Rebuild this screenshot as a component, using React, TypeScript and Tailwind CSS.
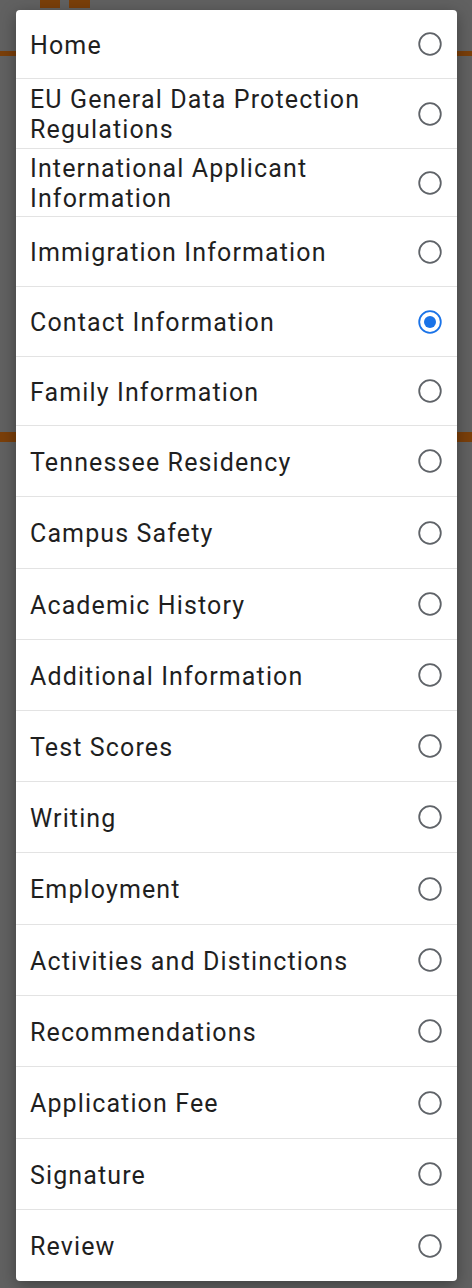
const items: { label: string; h: number }[] = [
  { label: "Home", h: 69 },
  { label: "EU General Data Protection Regulations", h: 70 },
  { label: "International Applicant Information", h: 68 },
  { label: "Immigration Information", h: 70 },
  { label: "Contact Information", h: 70 },
  { label: "Family Information", h: 69 },
  { label: "Tennessee Residency", h: 71 },
  { label: "Campus Safety", h: 72 },
  { label: "Academic History", h: 71 },
  { label: "Additional Information", h: 71 },
  { label: "Test Scores", h: 71 },
  { label: "Writing", h: 71 },
  { label: "Employment", h: 72 },
  { label: "Activities and Distinctions", h: 71 },
  { label: "Recommendations", h: 71 },
  { label: "Application Fee", h: 72 },
  { label: "Signature", h: 71 },
  { label: "Review", h: 71 },
];

const selected = "Contact Information";

function Radio({ on }: { on: boolean }) {
  return (
    <svg width="26" height="26" viewBox="0 0 26 26" className="shrink-0">
      <circle
        cx="13"
        cy="13"
        r="10.8"
        fill="none"
        stroke={on ? "#1a73e8" : "#5f6368"}
        strokeWidth="1.8"
      />
      {on && <circle cx="13" cy="13" r="6" fill="#1a73e8" />}
    </svg>
  );
}

export default function App() {
  return (
    <div className="relative h-[1288px] w-[472px] overflow-hidden bg-[#616161] font-['Roboto',sans-serif]">
      {/* page behind the scrim */}
      <div className="absolute left-[40px] top-0 h-[8px] w-[20px] bg-[#7a3f0a]" />
      <div className="absolute left-[69px] top-0 h-[8px] w-[21px] bg-[#7a3f0a]" />
      <div className="absolute left-0 top-[51px] h-[5px] w-full bg-[#7a3f0a]" />
      <div className="absolute left-0 top-[432px] h-[10px] w-full bg-[#7a3f0a]" />

      <div className="absolute left-[16px] top-[10px] w-[441px] overflow-hidden rounded-[4px] bg-white shadow-[0_4px_16px_rgba(0,0,0,0.35)]">
        {items.map((it, i) => (
          <div
            key={it.label}
            style={{ height: it.h }}
            className={`flex items-center justify-between pl-[14px] pr-[14px] ${
              i < items.length - 1 ? "border-b border-[#e3e3e3]" : ""
            }`}
          >
            <span className="max-w-[372px] pt-[3px] text-[25px] leading-[30px] tracking-[0.045em] text-[#1f1f1f]">
              {it.label}
            </span>
            <Radio on={it.label === selected} />
          </div>
        ))}
      </div>
    </div>
  );
}
